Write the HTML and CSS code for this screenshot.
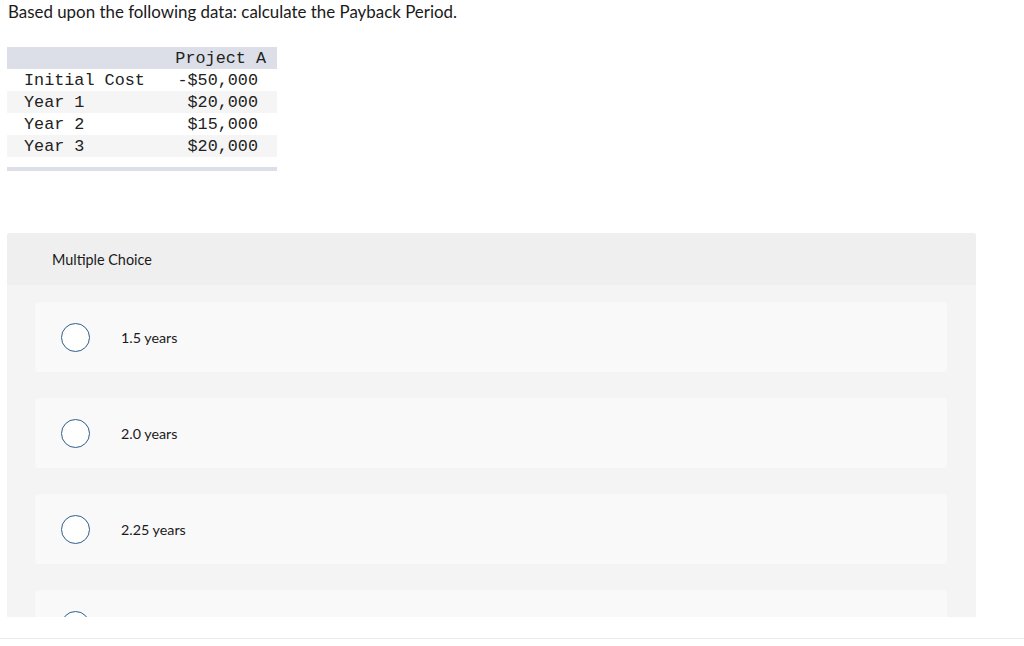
FILE: index.html
```html
<!DOCTYPE html>
<html>
<head>
<meta charset="utf-8">
<link rel="stylesheet" href="styles.css">
</head>
<body>
<div class="page">
  <p class="question">Based upon the following data: calculate the Payback Period.</p>
  <table class="data">
    <thead>
      <tr><th class="label"></th><th class="head">Project A</th></tr>
    </thead>
    <tbody>
      <tr><td class="label">Initial Cost</td><td class="val">-$50,000</td></tr>
      <tr class="alt"><td class="label">Year 1</td><td class="val">$20,000</td></tr>
      <tr><td class="label">Year 2</td><td class="val">$15,000</td></tr>
      <tr class="alt"><td class="label">Year 3</td><td class="val">$20,000</td></tr>
      <tr class="spacer"><td></td><td></td></tr>
    </tbody>
  </table>

  <div class="mc">
    <div class="mc-head">Multiple Choice</div>
    <div class="mc-body">
      <div class="choice"><span class="radio"></span><span class="ans">1.5 years</span></div>
      <div class="choice"><span class="radio"></span><span class="ans">2.0 years</span></div>
      <div class="choice"><span class="radio"></span><span class="ans">2.25 years</span></div>
      <div class="choice"><span class="radio"></span></div>
    </div>
  </div>
</div>
<div class="footer-line"></div>
</body>
</html>
```
FILE: styles.css
```css
html, body {
  margin: 0;
  padding: 0;
  background: #ffffff;
}
body {
  font-family: "Lato", "Open Sans", sans-serif;
  color: #1a1a1a;
  width: 1024px;
  height: 646px;
  overflow: hidden;
}
.page {
  padding: 0 0 0 8px;
}
.question {
  margin: 0;
  font-size: 16.9px;
  line-height: 24px;
  color: #1a1a1a;
}
.data {
  margin: 23px 0 0 -1px;
  border-collapse: collapse;
  width: 270px;
  font-family: "Liberation Mono", "Courier New", monospace;
  font-size: 16.8px;
  color: #222;
}
.data th, .data td {
  height: 20px;
  padding: 2px 0 0 0;
  line-height: 20px;
  font-weight: normal;
}
.data thead tr {
  background: #dcdfe7;
}
.data .label {
  text-align: left;
  padding-left: 17px;
  width: 140px;
}
.data .head {
  text-align: right;
  padding-right: 11px;
}
.data .val {
  text-align: right;
  padding-right: 19px;
}
.data tr.alt {
  background: #f5f5f5;
}
.data tr.spacer td {
  height: 10px;
  padding: 0;
  line-height: 10px;
  border-bottom: 4px solid #dcdfe7;
}
.mc {
  margin: 62px 0 0 -1px;
  width: 969px;
  height: 384px;
  overflow: hidden;
  background: #f4f4f4;
  border-radius: 3px 3px 0 0;
}
.mc-head {
  height: 52px;
  background: #efefef;
  padding-left: 45px;
  display: flex;
  align-items: center;
  font-size: 14.4px;
  color: #1a1a1a;
}
.mc-body {
  padding: 17px 29px 0 28px;
  display: flex;
  flex-direction: column;
  gap: 26px;
}
.choice {
  height: 70px;
  flex: none;
  background: #f9f9f9;
  border-radius: 4px;
  display: flex;
  align-items: center;
  padding-left: 26px;
}
.radio {
  width: 27px;
  height: 27px;
  border: 1.5px solid #2d5d8c;
  border-radius: 50%;
  background: #ffffff;
  flex: none;
}
.ans {
  margin-left: 31px;
  font-size: 14.3px;
  color: #1a1a1a;
}
.footer-line {
  position: absolute;
  left: 0;
  top: 638px;
  width: 1024px;
  height: 1px;
  background: #ececec;
}
```
